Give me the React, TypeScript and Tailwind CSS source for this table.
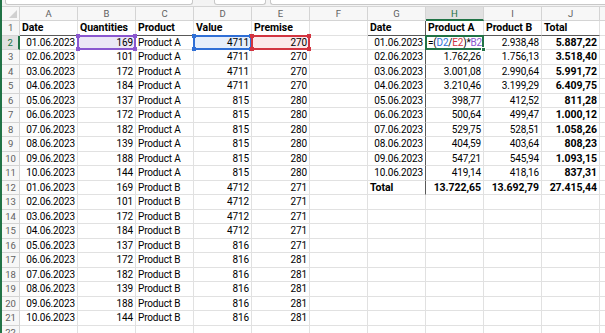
import React from 'react';

type Cell = { t?: React.ReactNode; r?: boolean; b?: boolean };

const COLS = ['A', 'B', 'C', 'D', 'E', 'F', 'G', 'H', 'I', 'J', ''];

const left: [string, string, string, string, string][] = [
  ['01.06.2023', '169', 'Product A', '4711', '270'],
  ['02.06.2023', '101', 'Product A', '4711', '270'],
  ['03.06.2023', '172', 'Product A', '4711', '270'],
  ['04.06.2023', '184', 'Product A', '4711', '270'],
  ['05.06.2023', '137', 'Product A', '815', '280'],
  ['06.06.2023', '172', 'Product A', '815', '280'],
  ['07.06.2023', '182', 'Product A', '815', '280'],
  ['08.06.2023', '139', 'Product A', '815', '280'],
  ['09.06.2023', '188', 'Product A', '815', '280'],
  ['10.06.2023', '144', 'Product A', '815', '280'],
  ['01.06.2023', '169', 'Product B', '4712', '271'],
  ['02.06.2023', '101', 'Product B', '4712', '271'],
  ['03.06.2023', '172', 'Product B', '4712', '271'],
  ['04.06.2023', '184', 'Product B', '4712', '271'],
  ['05.06.2023', '137', 'Product B', '816', '271'],
  ['06.06.2023', '172', 'Product B', '816', '281'],
  ['07.06.2023', '182', 'Product B', '816', '281'],
  ['08.06.2023', '139', 'Product B', '816', '281'],
  ['09.06.2023', '188', 'Product B', '816', '281'],
  ['10.06.2023', '144', 'Product B', '816', '281'],
];

const right: [string, string, string, string][] = [
  ['01.06.2023', '', '2.938,48', '5.887,22'],
  ['02.06.2023', '1.762,26', '1.756,13', '3.518,40'],
  ['03.06.2023', '3.001,08', '2.990,64', '5.991,72'],
  ['04.06.2023', '3.210,46', '3.199,29', '6.409,75'],
  ['05.06.2023', '398,77', '412,52', '811,28'],
  ['06.06.2023', '500,64', '499,47', '1.000,12'],
  ['07.06.2023', '529,75', '528,51', '1.058,26'],
  ['08.06.2023', '404,59', '403,64', '808,23'],
  ['09.06.2023', '547,21', '545,94', '1.093,15'],
  ['10.06.2023', '419,14', '418,16', '837,31'],
];

const formula = (
  <span className="tracking-[-0.2px]">
    =(<span className="text-[#2f6fd6]">D2</span>/<span className="text-[#d23440]">E2</span>)*<span className="text-[#8a57cf]">B2</span>
  </span>
);

function buildRow(r: number): Cell[] {
  const row: Cell[] = Array.from({ length: 11 }, () => ({}));
  if (r === 1) {
    ['Date', 'Quantities', 'Product', 'Value', 'Premise'].forEach((t, i) => (row[i] = { t, b: true }));
    ['Date', 'Product A', 'Product B', 'Total'].forEach((t, i) => (row[6 + i] = { t, b: true }));
    return row;
  }
  const l = left[r - 2];
  if (l) {
    row[0] = { t: l[0], r: true };
    row[1] = { t: l[1], r: true };
    row[2] = { t: l[2] };
    row[3] = { t: l[3], r: true };
    row[4] = { t: l[4], r: true };
  }
  const d = right[r - 2];
  if (d) {
    row[6] = { t: d[0], r: true };
    row[7] = r === 2 ? { t: formula } : { t: d[1], r: true };
    row[8] = { t: d[2], r: true };
    row[9] = { t: d[3], r: true, b: true };
  }
  if (r === 12) {
    row[6] = { t: 'Total', b: true };
    row[7] = { t: '13.722,65', r: true, b: true };
    row[8] = { t: '13.692,79', r: true, b: true };
    row[9] = { t: '27.415,44', r: true, b: true };
  }
  return row;
}

const SEL: Record<string, { border: string; fill: string; handle: string; fillHandle?: boolean }> = {
  '2-1': { border: 'border-[#8a57cf]', fill: 'bg-[#ece7f6]', handle: 'bg-[#8a57cf]' },
  '2-3': { border: 'border-[#2f6fd6]', fill: 'bg-[#e6eefa]', handle: 'bg-[#2f6fd6]' },
  '2-4': { border: 'border-[#d23440]', fill: 'bg-[#fbe9ea]', handle: 'bg-[#d23440]' },
  '2-7': { border: 'border-[#217346]', fill: 'bg-white', handle: 'bg-[#217346]', fillHandle: true },
};

const Handles: React.FC<{ cls: string }> = ({ cls }) => (
  <>
    <span className={`absolute -left-[3px] -top-[3px] w-[4px] h-[4px] ${cls}`} />
    <span className={`absolute -right-[3px] -top-[3px] w-[4px] h-[4px] ${cls}`} />
    <span className={`absolute -left-[3px] -bottom-[3px] w-[4px] h-[4px] ${cls}`} />
    <span className={`absolute -right-[3px] -bottom-[3px] w-[4px] h-[4px] ${cls}`} />
  </>
);

const App: React.FC = () => {
  const rows = Array.from({ length: 22 }, (_, i) => i + 1);

  return (
    <div className="w-[605px] h-[333px] overflow-hidden bg-white flex font-['Roboto',sans-serif] text-black">
      {/* window edge */}
      <div className="w-[2px] shrink-0 bg-[#217346]" />

      <div className="flex-1 flex flex-col min-w-0 overflow-hidden">
        {/* formula bar remnants */}
        <div className="h-[7px] shrink-0 bg-[#f3f3f3] flex gap-[4px] pl-[3px] border-b border-[#d4d4d4]">
          <div className="w-[188px] h-[5px] bg-white border border-t-0 border-[#c8c8c8] rounded-b-[3px]" />
          <div className="w-[13px]" />
          <div className="w-[52px] h-[5px] bg-white border border-t-0 border-[#c8c8c8] rounded-b-[3px]" />
          <div className="flex-1 h-[5px] bg-white border border-t-0 border-r-0 border-[#c8c8c8] rounded-bl-[3px]" />
        </div>

        {/* column headers */}
        <div className="flex h-[14px] shrink-0 bg-[#f7f7f7] text-[9.5px] text-[#616161] leading-[13px]">
          <div className="w-[18px] shrink-0 border-r border-b border-[#d4d4d4] relative">
            <span className="absolute right-[2px] bottom-[2px] w-0 h-0 border-l-[8px] border-l-transparent border-b-[8px] border-b-[#d0d0d0]" />
          </div>
          {COLS.map((c, i) => (
            <div
              key={i}
              className={`w-[58px] shrink-0 text-center border-r border-[#d4d4d4] ${
                c === 'H' ? 'bg-[#e1e1e1] text-[#217346] border-b-2 border-b-[#217346]' : 'border-b'
              }`}
            >
              {c}
            </div>
          ))}
        </div>

        {/* grid */}
        {rows.map((r) => {
          const cells = buildRow(r);
          return (
            <div key={r} className="flex h-[14.5px] shrink-0 text-[10px] leading-[14px] tracking-[-0.15px]">
              <div
                className={`w-[18px] shrink-0 text-center text-[9.5px] border-b border-[#d4d4d4] ${
                  r === 2
                    ? 'bg-[#e1e1e1] text-[#217346] border-r-2 border-r-[#217346]'
                    : 'bg-[#f7f7f7] text-[#616161] border-r'
                }`}
              >
                {r}
              </div>
              {cells.map((cell, ci) => {
                const key = `${r}-${ci}`;
                const sel = SEL[key];
                const headBorder = r === 1 && ci !== 5 && ci < 10;
                const darkRight = ci === 6 && r <= 12;
                return (
                  <div
                    key={ci}
                    className={`relative w-[58px] shrink-0 whitespace-nowrap overflow-visible px-[2px] border-r border-b ${
                      headBorder ? 'border-b-[#595959]' : 'border-b-[#e1e1e1]'
                    } ${darkRight ? 'border-r-[#595959]' : 'border-r-[#e1e1e1]'} ${
                      cell.r ? 'text-right' : 'text-left'
                    } ${cell.b ? 'font-bold text-[10.5px] tracking-[-0.05px]' : ''} ${sel ? sel.fill : ''}`}
                  >
                    {sel && (
                      <span
                        className={`absolute z-10 -left-px -top-px right-[-1px] bottom-[-1px] border-2 ${sel.border} pointer-events-none`}
                      >
                        {sel.fillHandle ? (
                          <span className="absolute -right-[4px] -bottom-[4px] w-[5px] h-[5px] bg-[#217346] border border-white" />
                        ) : (
                          <Handles cls={sel.handle} />
                        )}
                      </span>
                    )}
                    <span className="relative">{cell.t}</span>
                  </div>
                );
              })}
            </div>
          );
        })}
      </div>
    </div>
  );
};

export default App;
